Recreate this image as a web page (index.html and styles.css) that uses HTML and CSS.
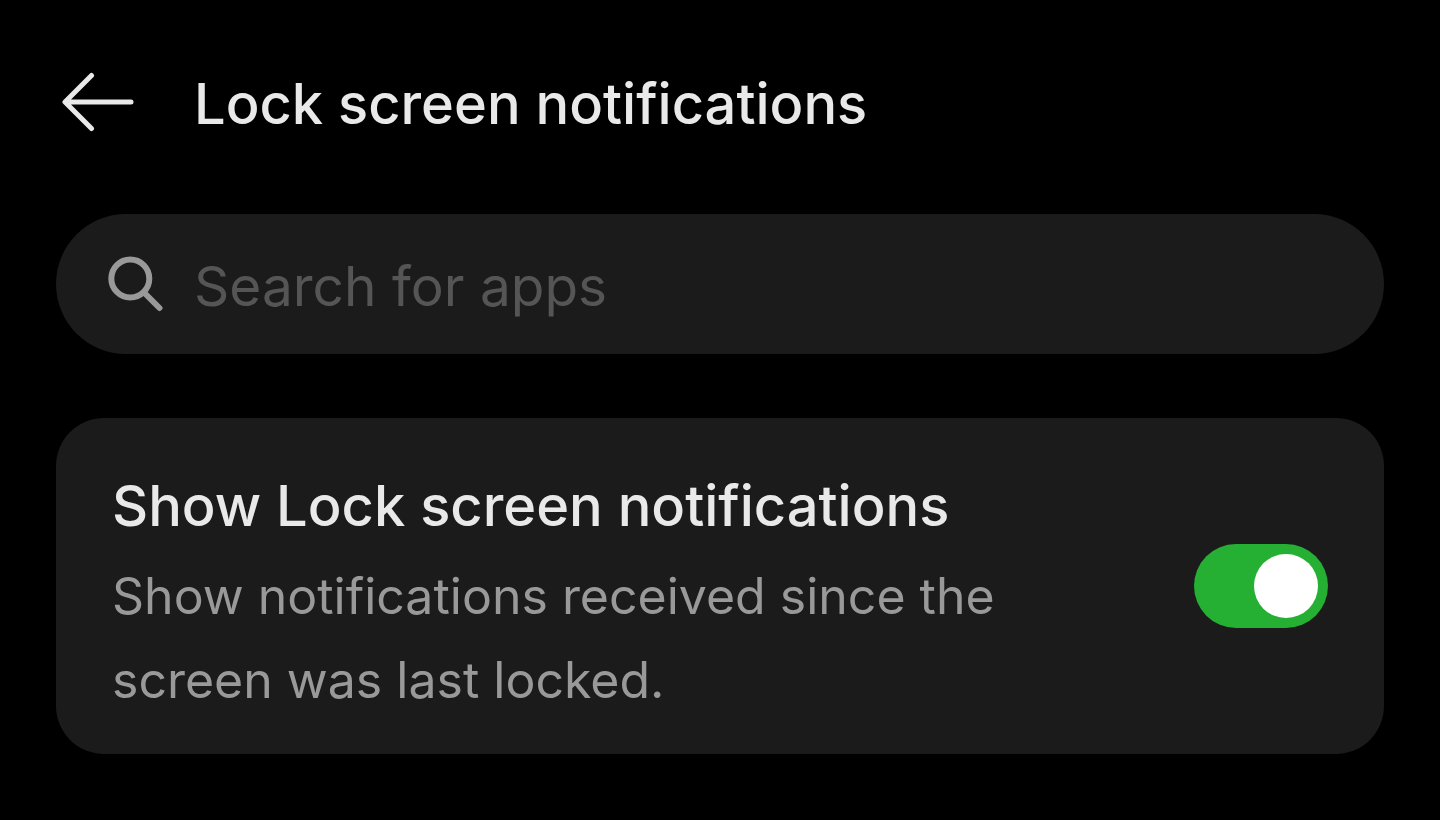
FILE: index.html
```html
<!DOCTYPE html>
<html lang="en">
<head>
<meta charset="utf-8">
<meta name="viewport" content="width=device-width, initial-scale=1">
<title>Lock screen notifications</title>
<link rel="stylesheet" href="styles.css">
</head>
<body>
<header class="header">
  <button class="back" type="button" aria-label="Back">
    <svg class="back-icon" viewBox="0 0 72 60" aria-hidden="true"><path d="M29.5 3.5 3 30l26.500 26.500M4 30h65"/></svg>
  </button>
  <h1 class="title">Lock screen notifications</h1>
</header>
<main class="content">
  <label class="search">
    <svg class="search-icon" viewBox="0 0 56 56" aria-hidden="true"><circle cx="22.300" cy="22.500" r="19"/><path d="m36.500 37 15 15"/></svg>
    <input class="search-input" type="search" placeholder="Search for apps" aria-label="Search for apps">
  </label>
  <section class="card">
    <div class="card-text">
      <label class="card-title" for="show">Show Lock screen notifications</label>
      <p class="card-note" id="note">Show notifications received since the screen was last locked.</p>
    </div>
    <input class="switch" id="show" type="checkbox" role="switch" aria-describedby="note" checked>
  </section>
</main>
</body>
</html>
```
FILE: styles.css
```css
* { box-sizing: border-box; }
body {
  margin: 0;
  padding: 64px 56px;
  background: #000;
  color: #e9e9e9;
  font-family: Inter, "Liberation Sans", sans-serif;
}
.header {
  display: flex;
  align-items: center;
  gap: 60px;
  margin-bottom: 70px;
}
.back {
  display: flex;
  margin-left: 6px;
  padding: 0 0 4px;
  border: 0;
  background: none;
  color: #e9e9e9;
}
.back-icon {
  width: 72px;
  height: 60px;
  fill: none;
  stroke: currentColor;
  stroke-width: 5;
  stroke-linecap: round;
  stroke-linejoin: round;
}
.title {
  margin: 0;
  font-size: 56px;
  font-weight: 500;
  line-height: 80px;
}
.content {
  display: flex;
  flex-direction: column;
  gap: 64px;
}
.search {
  display: flex;
  align-items: center;
  gap: 30px;
  padding: 30px 52px;
  border-radius: 70px;
  background: #1b1b1b;
}
.search-icon {
  flex: none;
  width: 56px;
  height: 56px;
  fill: none;
  stroke: #999;
  stroke-width: 6;
  stroke-linecap: round;
}
.search-input {
  flex: 1;
  min-width: 0;
  height: 80px;
  padding: 4px 0 0;
  border: 0;
  outline: 0;
  background: none;
  color: #e9e9e9;
  font: inherit;
  font-size: 55px;
}
.search-input::placeholder { color: #555; opacity: 1; }
.card {
  display: flex;
  align-items: center;
  justify-content: space-between;
  gap: 56px;
  padding: 0 56px;
  border-radius: 48px;
  background: #1b1b1b;
}
.card-text {
  max-width: 920px;
  padding: 44px 0 32px;
}
.card-title {
  display: block;
  margin-bottom: 4px;
  font-size: 56px;
  font-weight: 500;
  line-height: 88px;
}
.card-note {
  margin: 0;
  color: #999;
  font-size: 50px;
  line-height: 84px;
}
.switch {
  appearance: none;
  flex: none;
  display: flex;
  align-items: center;
  width: 134px;
  height: 84px;
  margin: 0;
  padding: 10px;
  border-radius: 42px;
  background: #555;
}
.switch::before {
  content: "";
  width: 64px;
  height: 64px;
  border-radius: 50%;
  background: #fff;
}
.switch:checked {
  justify-content: flex-end;
  background: #25b034;
}
```
